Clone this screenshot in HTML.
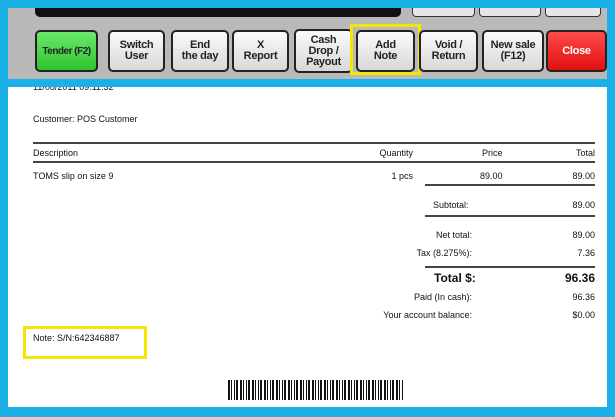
<!DOCTYPE html><html><head><style>
*{margin:0;padding:0;box-sizing:border-box}
body{width:615px;height:417px;background:#19b1e6;position:relative;overflow:hidden;font-family:"Liberation Sans",sans-serif}
.a{position:absolute}
#top{left:8px;top:8px;width:599px;height:71px;background:#b9b9b9}
.btn{position:absolute;top:30px;height:42px;border:2px solid #222;border-radius:5px;background:linear-gradient(#fafafa,#d8d8d8);font-weight:bold;font-size:11px;line-height:11px;color:#222;display:flex;align-items:center;justify-content:center;text-align:center;white-space:nowrap;letter-spacing:-0.3px}
#paper{left:8px;top:87px;width:599px;height:320px;background:#fff;overflow:hidden}
.t{position:absolute;font-size:9px;color:#111;white-space:nowrap}
.r{text-align:right}
.ln{position:absolute;height:2px;background:#444}
</style></head><body>
<div class="a" id="top"></div>
<div class="a" style="left:35px;top:8px;width:366px;height:9px;background:#111;border-radius:0 0 5px 5px"></div>
<div class="a" style="left:412px;top:8px;width:63px;height:9px;background:#e6e6e6;border:1px solid #333;border-top:0;border-radius:0 0 4px 4px"></div>
<div class="a" style="left:479px;top:8px;width:62px;height:9px;background:#e6e6e6;border:1px solid #333;border-top:0;border-radius:0 0 4px 4px"></div>
<div class="a" style="left:545px;top:8px;width:56px;height:9px;background:#e6e6e6;border:1px solid #333;border-top:0;border-radius:0 0 4px 4px"></div>
<div class="btn" style="left:35px;width:63px;background:linear-gradient(#6be86b,#2fc42f);font-size:10px;letter-spacing:-0.5px">Tender (F2)</div>
<div class="btn" style="left:108px;width:57px">Switch<br>User</div>
<div class="btn" style="left:171px;width:58px">End<br>the day</div>
<div class="btn" style="left:232px;width:57px">X<br>Report</div>
<div class="btn" style="left:294px;width:59px;top:29px;height:44px">Cash<br>Drop /<br>Payout</div>
<div class="a" style="left:350px;top:24px;width:71px;height:51px;border:3px solid #f3e600"></div>
<div class="btn" style="left:356px;width:59px">Add<br>Note</div>
<div class="btn" style="left:419px;width:59px">Void /<br>Return</div>
<div class="btn" style="left:482px;width:62px">New sale<br>(F12)</div>
<div class="btn" style="left:546px;width:61px;background:linear-gradient(#ff4a4a,#e01010);color:#fff">Close</div>
<div class="a" id="paper">
<div class="t" style="left:25px;top:-5px">11/08/2011 09:11:32</div>
<div class="t" style="left:25px;top:27px">Customer: POS Customer</div>
<div class="ln" style="left:25px;top:55px;width:562px"></div>
<div class="t" style="left:25px;top:61px">Description</div>
<div class="t r" style="left:330px;width:75px;top:61px">Quantity</div>
<div class="t" style="left:474px;top:61px">Price</div>
<div class="t r" style="left:520px;width:67px;top:61px">Total</div>
<div class="ln" style="left:25px;top:74px;width:562px"></div>
<div class="t" style="left:25px;top:84px">TOMS slip on size 9</div>
<div class="t r" style="left:330px;width:75px;top:84px">1 pcs</div>
<div class="t" style="left:472px;top:84px">89.00</div>
<div class="t r" style="left:520px;width:67px;top:84px">89.00</div>
<div class="ln" style="left:417px;top:97px;width:170px"></div>
<div class="t" style="left:425px;top:113px">Subtotal:</div>
<div class="t r" style="left:520px;width:67px;top:113px">89.00</div>
<div class="ln" style="left:417px;top:128px;width:170px"></div>
<div class="t r" style="left:340px;width:124px;top:143px">Net total:</div>
<div class="t r" style="left:520px;width:67px;top:143px">89.00</div>
<div class="t r" style="left:340px;width:124px;top:161px">Tax (8.275%):</div>
<div class="t r" style="left:520px;width:67px;top:161px">7.36</div>
<div class="ln" style="left:417px;top:179px;width:170px"></div>
<div class="t" style="left:426px;top:184px;font-size:12px;font-weight:bold">Total $:</div>
<div class="t r" style="left:520px;width:67px;top:184px;font-size:12px;font-weight:bold">96.36</div>
<div class="t r" style="left:340px;width:124px;top:205px">Paid (In cash):</div>
<div class="t r" style="left:520px;width:67px;top:205px">96.36</div>
<div class="t r" style="left:340px;width:124px;top:223px">Your account balance:</div>
<div class="t r" style="left:520px;width:67px;top:223px">$0.00</div>
<div class="a" style="left:15px;top:239px;width:124px;height:33px;border:3px solid #f3e600"></div>
<div class="t" style="left:25px;top:246px">Note: S/N:642346887</div>
<div class="a" style="left:220px;top:293px;width:176px;height:20px;background:repeating-linear-gradient(90deg,#111 0 2px,#fff 2px 3px,#111 3px 4px,#fff 4px 6px,#111 6px 7px,#fff 7px 8px,#111 8px 10px,#fff 10px 12px)"></div>
</div>
</body></html>
